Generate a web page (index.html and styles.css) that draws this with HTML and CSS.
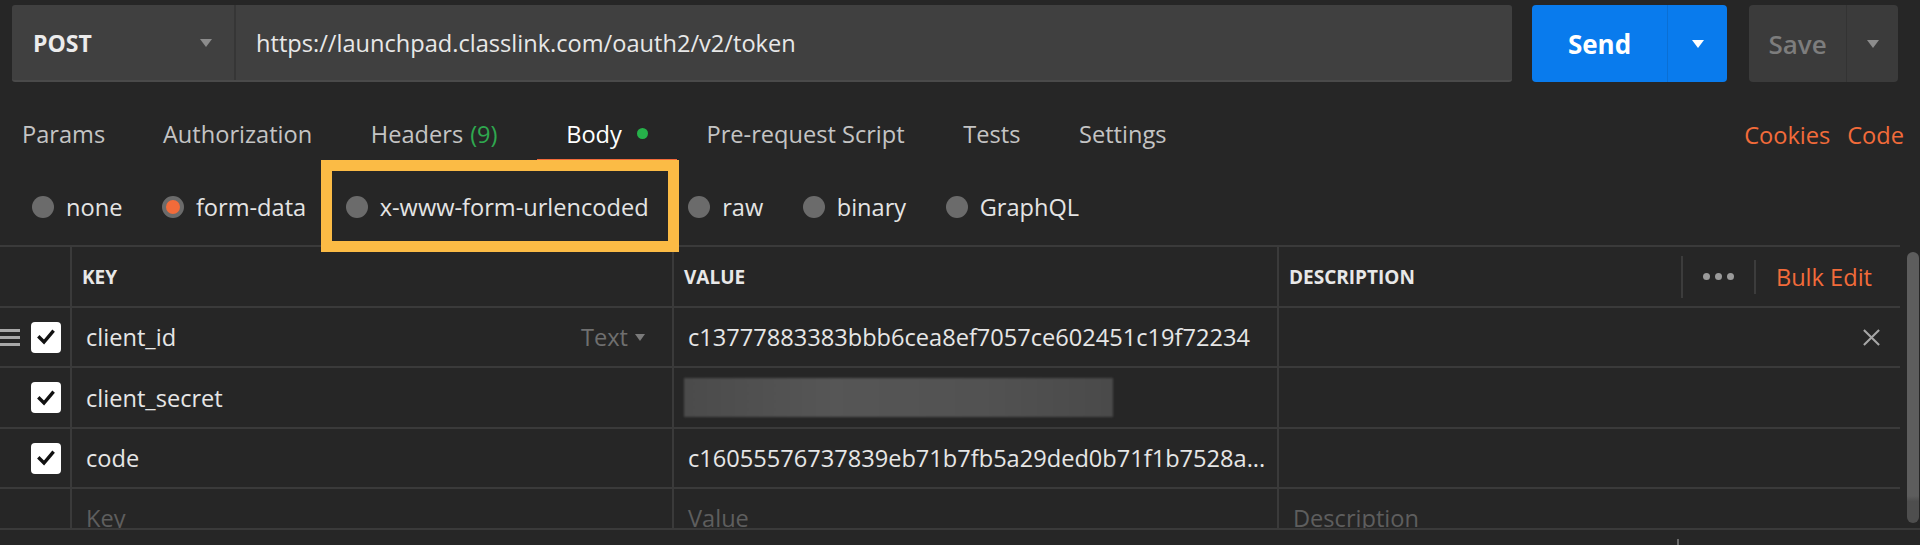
FILE: index.html
```html
<!DOCTYPE html>
<html>
<head>
<meta charset="utf-8">
<link rel="stylesheet" href="styles.css">
</head>
<body>
<div class="app">
  <header class="request-bar">
    <div class="url-group">
      <div class="method"><span class="method-name">POST</span><i class="caret caret-gray"></i></div>
      <div class="url">https://launchpad.classlink.com/oauth2/v2/token</div>
    </div>
    <div class="split-btn send">
      <span class="main">Send</span>
      <span class="drop"><i class="caret caret-white"></i></span>
    </div>
    <div class="split-btn save">
      <span class="main">Save</span>
      <span class="drop"><i class="caret caret-gray"></i></span>
    </div>
  </header>

  <nav class="tabs">
    <div class="tab-list">
      <span class="tab">Params</span>
      <span class="tab">Authorization</span>
      <span class="tab">Headers <span class="count">(9)</span></span>
      <span class="tab active">Body <i class="dot"></i></span>
      <span class="tab">Pre-request Script</span>
      <span class="tab">Tests</span>
      <span class="tab">Settings</span>
    </div>
    <div class="links">
      <span class="link">Cookies</span>
      <span class="link">Code</span>
    </div>
  </nav>

  <div class="body-types">
    <span class="opt"><i class="radio"></i>none</span>
    <span class="opt"><i class="radio checked"></i>form-data</span>
    <span class="opt highlight"><i class="radio"></i>x-www-form-urlencoded</span>
    <span class="opt"><i class="radio"></i>raw</span>
    <span class="opt"><i class="radio"></i>binary</span>
    <span class="opt"><i class="radio"></i>GraphQL</span>
  </div>

  <div class="table-wrap">
    <div class="table">
      <div class="cell head"></div>
      <div class="cell head">KEY</div>
      <div class="cell head">VALUE</div>
      <div class="cell head desc-head">
        <span>DESCRIPTION</span>
        <span class="head-tools">
          <i class="sep"></i>
          <span class="dots"><i></i><i></i><i></i></span>
          <i class="sep"></i>
          <span class="bulk">Bulk Edit</span>
        </span>
      </div>

      <div class="cell ctrl">
        <span class="drag"><i></i><i></i><i></i></span>
        <span class="check"><svg viewBox="0 0 20 20" width="20" height="20"><path d="M3.5 10.5 L8 15 L16.5 5" fill="none" stroke="#111" stroke-width="3.4" stroke-linecap="square"/></svg></span>
      </div>
      <div class="cell key-cell"><span>client_id</span><span class="type">Text <i class="caret caret-dim"></i></span></div>
      <div class="cell">c13777883383bbb6cea8ef7057ce602451c19f72234</div>
      <div class="cell close-cell">
        <svg class="close" viewBox="0 0 20 20" width="19" height="19"><path d="M2 2 L18 18 M18 2 L2 18" stroke="#a6a6a6" stroke-width="2.2" fill="none"/></svg>
      </div>

      <div class="cell ctrl">
        <span class="check"><svg viewBox="0 0 20 20" width="20" height="20"><path d="M3.5 10.5 L8 15 L16.5 5" fill="none" stroke="#111" stroke-width="3.4" stroke-linecap="square"/></svg></span>
      </div>
      <div class="cell">client_secret</div>
      <div class="cell"><span class="redacted"></span></div>
      <div class="cell"></div>

      <div class="cell ctrl">
        <span class="check"><svg viewBox="0 0 20 20" width="20" height="20"><path d="M3.5 10.5 L8 15 L16.5 5" fill="none" stroke="#111" stroke-width="3.4" stroke-linecap="square"/></svg></span>
      </div>
      <div class="cell">code</div>
      <div class="cell">c16055576737839eb71b7fb5a29ded0b71f1b7528a...</div>
      <div class="cell"></div>

      <div class="cell ctrl"></div>
      <div class="cell placeholder">Key</div>
      <div class="cell placeholder">Value</div>
      <div class="cell placeholder">Description</div>
    </div>
    <div class="scroll-track"><div class="thumb"></div></div>
  </div>

  <footer class="footer"><i class="tick"></i></footer>
</div>
</body>
</html>
```

FILE: styles.css
```css
* { box-sizing: border-box; }

html, body {
  margin: 0;
  padding: 0;
  background: #262626;
  overflow: hidden;
}

body {
  font-family: "Open Sans", "Noto Sans", sans-serif;
  font-size: 23.6px;
  color: #e6e6e6;
  width: 1920px;
  height: 545px;
}

.app {
  display: flex;
  flex-direction: column;
  height: 545px;
}

/* ---------- request bar ---------- */
.request-bar {
  display: flex;
  height: 82px;
  padding: 5px 22px 0 12px;
}

.url-group {
  flex: 1;
  display: flex;
  background: #404040;
  border-radius: 3px;
  border-bottom: 2px solid #4a4a4a;
}

.method {
  width: 224px;
  display: flex;
  align-items: center;
  justify-content: space-between;
  padding: 0 22px 0 21px;
  border-right: 2px solid #363636;
}

.method-name {
  font-weight: 700;
  font-size: 23px;
  color: #ececec;
}

.url {
  display: flex;
  align-items: center;
  padding-left: 20px;
  color: #e8e8e8;
}

.caret {
  display: inline-block;
  width: 0;
  height: 0;
  border-left: 6px solid transparent;
  border-right: 6px solid transparent;
  border-top: 8px solid #8a8a8a;
}
.caret-white { border-top-color: #ffffff; }
.caret-gray { border-top-color: #8c8c8c; }
.caret-dim { border-top-color: #7a7a7a; border-left-width: 5px; border-right-width: 5px; border-top-width: 7px; }

.split-btn {
  display: flex;
  border-radius: 4px;
  font-size: 26px;
}
.split-btn .main {
  display: flex;
  align-items: center;
  justify-content: center;
}
.split-btn .drop {
  display: flex;
  align-items: center;
  justify-content: center;
}

.send {
  margin-left: 20px;
  width: 195px;
  background: #097bed;
  color: #ffffff;
  font-weight: 700;
}
.send .main { width: 136px; border-right: 1px solid #0a6fd4; }
.send .drop { flex: 1; }

.save {
  margin-left: 22px;
  width: 149px;
  background: #3b3b3b;
  color: #7d7d7d;
  font-weight: 600;
}
.save .main { width: 98px; border-right: 1px solid #333333; }
.save .drop { flex: 1; }

/* ---------- tabs ---------- */
.tabs {
  display: flex;
  justify-content: space-between;
  height: 79px;
  padding: 0 16px 0 0;
}

.tab-list {
  display: flex;
}

.tab {
  display: flex;
  align-items: center;
  gap: 7px;
  height: 79px;
  padding: 26px 29.3px 0 29.3px;
  color: #c4c4c4;
  border-bottom: 2px solid transparent;
}
.tab:first-child { padding-left: 22px; padding-right: 28.5px; }

.tab .count { color: #2fa84f; margin-right: 10px; }

.tab.active {
  color: #ffffff;
  border-bottom-color: #f26b3a;
  gap: 15px;
}

.dot {
  width: 11px;
  height: 11px;
  border-radius: 50%;
  background: #26b14a;
}

.links {
  display: flex;
  align-items: center;
  gap: 17px;
  padding-top: 26px;
}
.link { color: #f26b3a; }

/* ---------- body types ---------- */
.body-types {
  display: flex;
  align-items: center;
  height: 84px;
  padding: 8px 0 0 32px;
}

.opt {
  position: relative;
  display: flex;
  align-items: center;
  gap: 12px;
  margin-right: 39.5px;
  color: #e4e4e4;
  line-height: 30px;
}

.radio {
  width: 22px;
  height: 22px;
  border-radius: 50%;
  background: #6b6b6b;
}
.radio.checked {
  background: #f26b3a;
  border: 4px solid #6b6b6b;
}

.highlight::after {
  content: "";
  position: absolute;
  left: -25px;
  right: -30px;
  top: -32px;
  bottom: -30px;
  border: 11px solid #fbbb45;
  pointer-events: none;
}

/* ---------- table ---------- */
.table-wrap {
  display: flex;
  height: 283px;
}

.table {
  width: 1900px;
  display: grid;
  grid-template-columns: 72px 602px 605px 621px;
  grid-template-rows: 61px 60px 61px 60px 60px;
  overflow: hidden;
  border-top: 2px solid #3a3a3a;
}

.cell {
  display: flex;
  align-items: center;
  padding-left: 14px;
  border-right: 2px solid #3a3a3a;
  border-bottom: 2px solid #3a3a3a;
  color: #e6e6e6;
  white-space: nowrap;
}
.cell:nth-child(4n) { border-right: none; }

.head {
  font-size: 19px;
  font-weight: 700;
  color: #e8e8e8;
  padding-left: 10px;
}

.desc-head {
  justify-content: space-between;
  padding-right: 28px;
}

.head-tools {
  display: flex;
  align-items: center;
  gap: 20px;
  font-size: 23.6px;
  font-weight: 400;
}

.sep {
  width: 2px;
  height: 42px;
  background: #3c3c3c;
}
.head-tools .sep:nth-child(3) { height: 34px; }

.dots { display: flex; gap: 5px; }
.dots i {
  width: 7px;
  height: 7px;
  border-radius: 50%;
  background: #9a9a9a;
}

.bulk { color: #f26b3a; }

.ctrl {
  padding-left: 0;
}

.drag {
  display: flex;
  flex-direction: column;
  gap: 4px;
  width: 20px;
  margin-right: 11px;
}
.drag i {
  height: 3px;
  background: #a8a8a8;
}

.ctrl .check { margin-left: 31px; }
.drag + .check { margin-left: 0; }

.check {
  width: 30px;
  height: 31px;
  background: #ffffff;
  border-radius: 4px;
  display: flex;
  align-items: center;
  justify-content: center;
}

.key-cell {
  justify-content: space-between;
  padding-right: 27px;
}

.type {
  color: #6f6f6f;
  display: flex;
  align-items: center;
  gap: 7px;
}

.close-cell {
  justify-content: flex-end;
  padding-right: 19px;
}

.redacted {
  width: 429px;
  height: 39px;
  margin-left: -4px;
  background: linear-gradient(90deg, #4b4b4b 0%, #565656 35%, #525252 70%, #4a4a4a 100%);
  filter: blur(1px);
}

.placeholder { color: #5e5e5e; }

.scroll-track {
  flex: 1;
  padding: 7px 1px 5px 7px;
}
.thumb {
  height: 100%;
  border-radius: 6px;
  background: linear-gradient(180deg, #5d5d5d 0%, #5d5d5d 90%, #4e4e4e 92%, #4e4e4e 100%);
}

/* ---------- footer ---------- */
.footer {
  flex: 1;
  border-top: 2px solid #3a3a3a;
  display: flex;
}
.tick {
  width: 2px;
  height: 6px;
  margin: 9px 0 0 1677px;
  background: #6a6a6a;
}
```
